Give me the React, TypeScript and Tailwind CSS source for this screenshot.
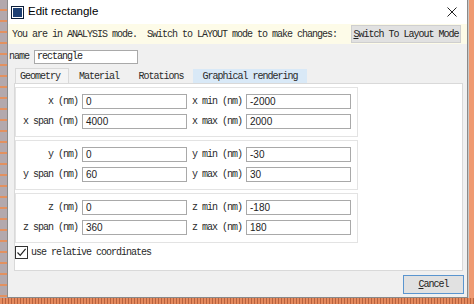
const mono = "font-['Liberation_Mono',monospace] text-[10px] tracking-[-1px]";
const sans = "font-['Liberation_Sans',Arial,sans-serif]";

type FieldRowProps = {
  label: string;
  value: string;
  label2: string;
  value2: string;
};

function Input({ value, width }: { value: string; width: string }) {
  return (
    <div
      className={`flex h-[15px] items-center border border-[#a9a9a9] bg-white pl-[3px] text-[10px] text-[#222] ${sans} ${width}`}
    >
      {value}
    </div>
  );
}

function FieldRow({ label, value, label2, value2 }: FieldRowProps) {
  return (
    <div className="flex items-center">
      <div className={`w-[62px] text-right text-[#2a2a2a] ${mono}`}>{label}</div>
      <div className="ml-[4px]">
        <Input value={value} width="w-[105px]" />
      </div>
      <div className={`ml-[5px] w-[50px] text-[#2a2a2a] ${mono}`}>{label2}</div>
      <div className="ml-[4px]">
        <Input value={value2} width="w-[105px]" />
      </div>
    </div>
  );
}

function Group({ rows }: { rows: FieldRowProps[] }) {
  return (
    <div className="flex w-[343px] flex-col gap-[5px] border border-[#e3e3e3] pt-[6px] pb-[7px]">
      {rows.map((r) => (
        <FieldRow key={r.label} {...r} />
      ))}
    </div>
  );
}

const groups: FieldRowProps[][] = [
  [
    { label: 'x (nm)', value: '0', label2: 'x min (nm)', value2: '-2000' },
    { label: 'x span (nm)', value: '4000', label2: 'x max (nm)', value2: '2000' },
  ],
  [
    { label: 'y (nm)', value: '0', label2: 'y min (nm)', value2: '-30' },
    { label: 'y span (nm)', value: '60', label2: 'y max (nm)', value2: '30' },
  ],
  [
    { label: 'z (nm)', value: '0', label2: 'z min (nm)', value2: '-180' },
    { label: 'z span (nm)', value: '360', label2: 'z max (nm)', value2: '180' },
  ],
];

export default function App() {
  return (
    <div className="flex h-[304px] w-[474px] flex-col overflow-hidden bg-[#e58b63]">
      <div className="flex h-[298px]">
        {/* desktop behind, left */}
        <div className="h-full w-[7px] bg-[repeating-linear-gradient(180deg,#b3a9ad_0_9px,#e3915f_9px_11px)]" />

        {/* dialog */}
        <div className="flex h-full w-[461px] flex-col border-r border-b border-l border-[#8a8a8a] bg-[#f0f0f0]">
          {/* title bar */}
          <div className="flex h-[24px] items-center bg-white">
            <div className="ml-[3px] flex h-[13px] w-[13px] items-center justify-center border border-[#0d1f3a] bg-white">
              <div className="h-[9px] w-[9px] bg-[#1d3f73]" />
            </div>
            <div className={`ml-[4px] text-[11.5px] text-black ${sans}`}>Edit rectangle</div>
            <svg
              className="ml-auto mr-[10px]"
              width="10"
              height="10"
              viewBox="0 0 10 10"
              fill="none"
              stroke="#222"
              strokeWidth="1"
            >
              <path d="M0.5 0.5 L9.5 9.5 M9.5 0.5 L0.5 9.5" />
            </svg>
          </div>

          {/* info bar */}
          <div className="flex h-[20px] items-center bg-[#fdfbe8]">
            <div className={`ml-[4px] whitespace-pre text-[#2a2a2a] ${mono}`}>
              You are in ANALYSIS mode.  Switch to LAYOUT mode to make changes:
            </div>
            <div
              className={`ml-auto mr-[6px] flex h-[18px] w-[110px] items-center justify-center border border-[#cfcfcf] bg-[#e1e1e1] text-[#222] ${mono}`}
            >
              <span className="underline">S</span>witch To Layout Mode
            </div>
          </div>

          {/* name */}
          <div className="mt-[5px] flex items-center">
            <div className={`ml-[1px] w-[25px] text-[#2a2a2a] ${mono}`}>name</div>
            <div
              className={`flex h-[14px] w-[104px] items-center border border-[#a9a9a9] bg-white pl-[2px] text-[#222] ${mono}`}
            >
              rectangle
            </div>
          </div>

          {/* tabs */}
          <div className={`mt-[4px] ml-[7px] flex h-[15px] items-end text-[#2a2a2a] ${mono}`}>
            <div className="flex h-[15px] w-[54px] items-center border-t border-r border-l border-[#d9d9d9] bg-[#f4f4f4] pl-[4px]">
              Geometry
            </div>
            <div className="flex h-[14px] w-[60px] items-center justify-center bg-[#f0f0f0]">
              Material
            </div>
            <div className="flex h-[14px] w-[64px] items-center justify-center bg-[#f0f0f0]">
              Rotations
            </div>
            <div className="flex h-[14px] w-[114px] items-center justify-center bg-[#d9e9f7]">
              Graphical rendering
            </div>
          </div>

          {/* pane */}
          <div className="ml-[6px] mr-[4px] flex h-[188px] flex-col border border-[#d9d9d9] bg-white pt-[3px]">
            <div className="flex flex-col gap-[3px]">
              {groups.map((g, i) => (
                <Group key={i} rows={g} />
              ))}
            </div>
            <div className="mt-[2px] flex items-center">
              <div className="flex h-[13px] w-[13px] items-center justify-center border border-[#333] bg-white">
                <svg width="11" height="11" viewBox="0 0 11 11" fill="none" stroke="#222" strokeWidth="1.2">
                  <path d="M1.5 5.5 L4.2 8.3 L9.6 1.8" />
                </svg>
              </div>
              <div className={`ml-[3px] text-[#2a2a2a] ${mono}`}>use relative coordinates</div>
            </div>
          </div>

          {/* footer */}
          <div className="flex flex-1 items-center justify-end pr-[3px]">
            <div
              className={`flex h-[19px] w-[61px] items-center justify-center border border-[#5a95cf] bg-[#e1e1e1] text-[#222] ${mono}`}
            >
              <span className="underline">C</span>ancel
            </div>
          </div>
        </div>

        {/* desktop behind, right */}
        <div className="h-full flex-1 border-l border-[#c8c8c8] bg-[#ef9a72]" />
      </div>
      <div className="h-[6px] bg-[repeating-linear-gradient(90deg,#e58b5f_0_2px,#b8623e_2px_3px)]" />
    </div>
  );
}
